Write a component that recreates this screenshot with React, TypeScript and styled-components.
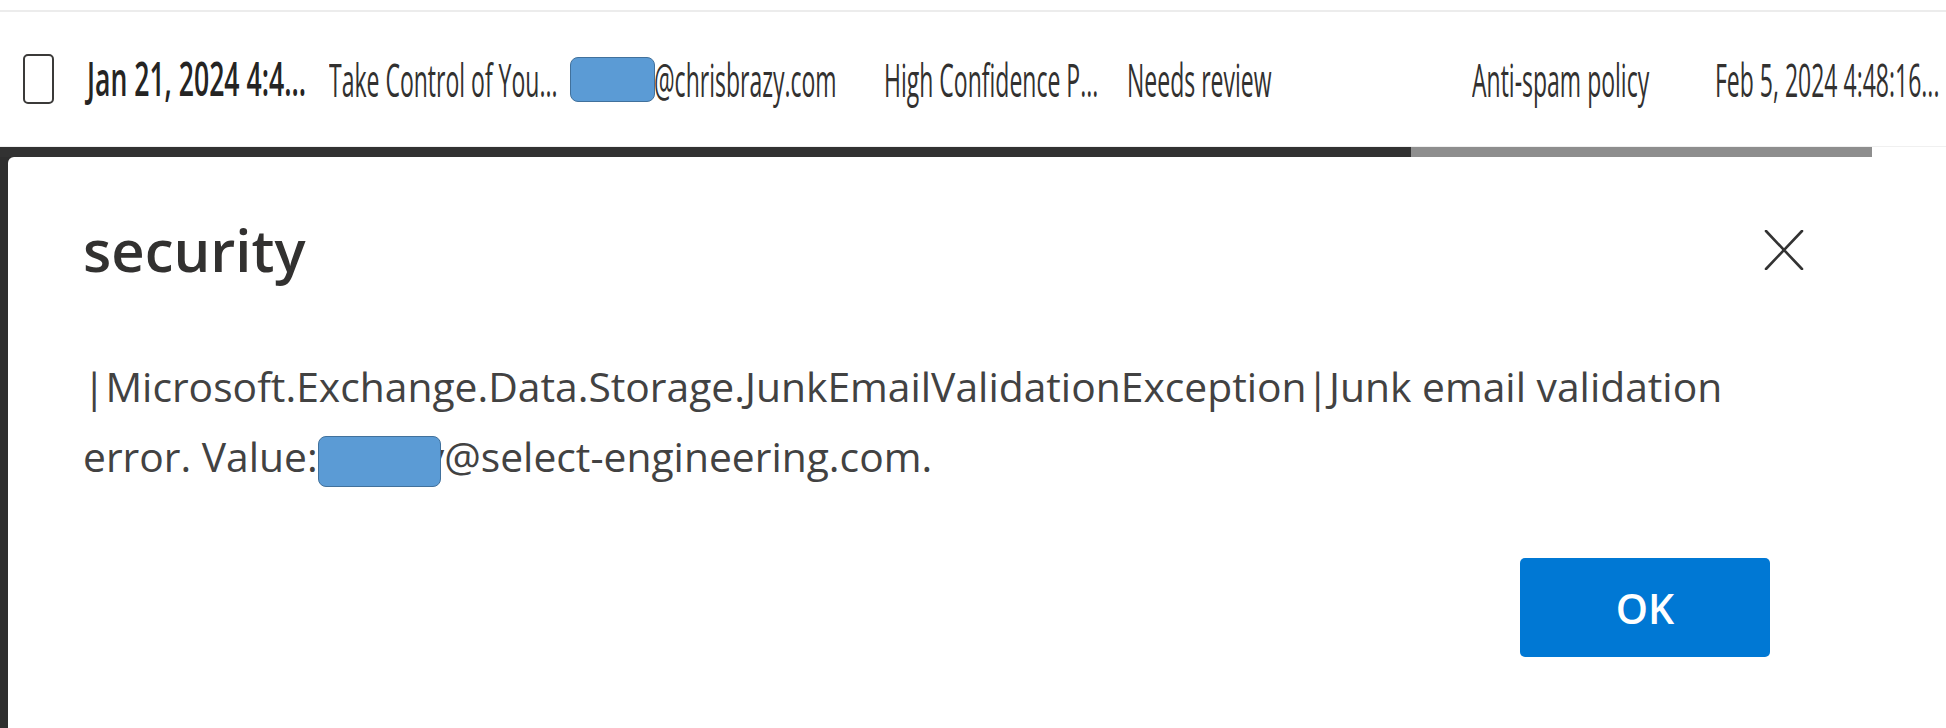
import styled, {createGlobalStyle} from 'styled-components';

const GlobalStyle = createGlobalStyle`
	html, body {
		margin: 0;
		padding: 0;
		background: #ffffff;
	}
	body {
		font-family: 'Open Sans', 'Noto Sans', sans-serif;
	}
`;

interface IMessage {
	received: string;
	subject: string;
	recipientDomain: string;
	reason: string;
	status: string;
	policy: string;
	expires: string;
}

const message: IMessage = {
	received: 'Jan 21, 2024 4:4...',
	subject: 'Take Control of You...',
	recipientDomain: '@chrisbrazy.com',
	reason: 'High Confidence P...',
	status: 'Needs review',
	policy: 'Anti-spam policy',
	expires: 'Feb 5, 2024 4:48:16...',
};

const Page = styled.div`
	width: 1946px;
	height: 728px;
	display: flex;
	flex-direction: column;
	overflow: hidden;
`;

const TopRule = styled.div`
	height: 2px;
	margin-top: 10px;
	background: #ececec;
`;

const Row = styled.div`
	display: grid;
	grid-template-columns: 64px 242px 241px 314px 243px 345px 243px 1fr;
	align-items: center;
	height: 134px;
	padding-left: 23px;
	border-bottom: 1px solid #f0f0f0;
	color: #323130;
`;

const Check = styled.div`
	width: 27px;
	height: 46px;
	border: 2px solid #3b3a39;
	border-radius: 5px;
`;

const Cell = styled.div`
	display: flex;
	align-items: center;
	min-width: 0;
`;

// the list row in the capture is stretched vertically, so the text is too
const CellText = styled.span<{$bold?: boolean}>`
	display: inline-block;
	white-space: nowrap;
	font-size: ${(props) => (props.$bold ? '26.6px' : '23px')};
	font-weight: ${(props) => (props.$bold ? 600 : 400)};
	color: ${(props) => (props.$bold ? '#252423' : '#323130')};
	transform: scaleY(${(props) => (props.$bold ? 1.74 : 2)});
	transform-origin: left center;
`;

const Redaction = styled.span<{$w: number; $h: number; $overlap?: number}>`
	position: relative;
	z-index: 1;
	display: inline-block;
	box-sizing: border-box;
	width: ${(props) => props.$w}px;
	height: ${(props) => props.$h}px;
	margin-right: ${(props) => -(props.$overlap || 0)}px;
	background: #5b9bd5;
	border: 1.5px solid #41719c;
	border-radius: 8px;
	vertical-align: middle;
`;

const Bar = styled.div`
	display: flex;
	height: 10px;
`;

const BarTrack = styled.div`
	width: 1411px;
	background: #323232;
`;

const BarThumb = styled.div`
	width: 461px;
	background: #8e8e8e;
`;

const Overlay = styled.div`
	flex: 1;
	display: flex;
	background: #2e2e2e;
	padding-left: 8px;
`;

const Dialog = styled.div`
	flex: 1;
	background: #ffffff;
	border-top-left-radius: 6px;
	padding: 64px 0 0 75px;
	color: #323130;
`;

const Header = styled.div`
	display: flex;
	align-items: center;
	justify-content: space-between;
	padding-right: 140px;
`;

const Title = styled.h2`
	margin: 0;
	font-size: 58px;
	line-height: 58px;
	font-weight: 600;
	color: #323130;
`;

const CloseButton = styled.button`
	display: flex;
	align-items: center;
	justify-content: center;
	width: 44px;
	height: 44px;
	padding: 0;
	border: none;
	background: transparent;
	color: #333333;
	cursor: pointer;
`;

const Body = styled.p`
	margin: 72px 0 0;
	font-size: 40.8px;
	line-height: 70px;
	color: #424242;
	white-space: nowrap;
`;

const Footer = styled.div`
	display: flex;
	justify-content: flex-end;
	margin-top: 67px;
	padding-right: 176px;
`;

const PrimaryButton = styled.button`
	width: 250px;
	height: 99px;
	border: none;
	border-radius: 5px;
	background: #0078d4;
	color: #ffffff;
	font-family: 'Open Sans', 'Noto Sans', sans-serif;
	font-size: 41px;
	font-weight: 600;
	cursor: pointer;
`;

function CloseIcon() {
	return (
		<svg width="40" height="40" viewBox="0 0 40 40" fill="none">
			<path
				d="M2 1 L38 39 M38 1 L2 39"
				stroke="currentColor"
				strokeWidth="2.6"
				strokeLinecap="round"
			/>
		</svg>
	);
}

function MessageRow({m}: {m: IMessage}) {
	return (
		<Row>
			<Cell>
				<Check />
			</Cell>
			<Cell>
				<CellText $bold>{m.received}</CellText>
			</Cell>
			<Cell>
				<CellText>{m.subject}</CellText>
			</Cell>
			<Cell>
				<Redaction $w={85} $h={45} $overlap={1} />
				<CellText>{m.recipientDomain}</CellText>
			</Cell>
			<Cell>
				<CellText>{m.reason}</CellText>
			</Cell>
			<Cell>
				<CellText>{m.status}</CellText>
			</Cell>
			<Cell>
				<CellText>{m.policy}</CellText>
			</Cell>
			<Cell>
				<CellText>{m.expires}</CellText>
			</Cell>
		</Row>
	);
}

export default function App() {
	return (
		<>
			<GlobalStyle />
			<Page>
				<TopRule />
				<MessageRow m={message} />
				<Bar>
					<BarTrack />
					<BarThumb />
				</Bar>
				<Overlay>
					<Dialog role="dialog" aria-labelledby="dlg-title">
						<Header>
							<Title id="dlg-title">security</Title>
							<CloseButton aria-label="Close">
								<CloseIcon />
							</CloseButton>
						</Header>
						<Body>
							|Microsoft.Exchange.Data.Storage.JunkEmailValidationException|Junk email validation
							<br />
							error. Value:
							<Redaction $w={123} $h={51} $overlap={17} />
							y@select-engineering.com.
						</Body>
						<Footer>
							<PrimaryButton>OK</PrimaryButton>
						</Footer>
					</Dialog>
				</Overlay>
			</Page>
		</>
	);
}
